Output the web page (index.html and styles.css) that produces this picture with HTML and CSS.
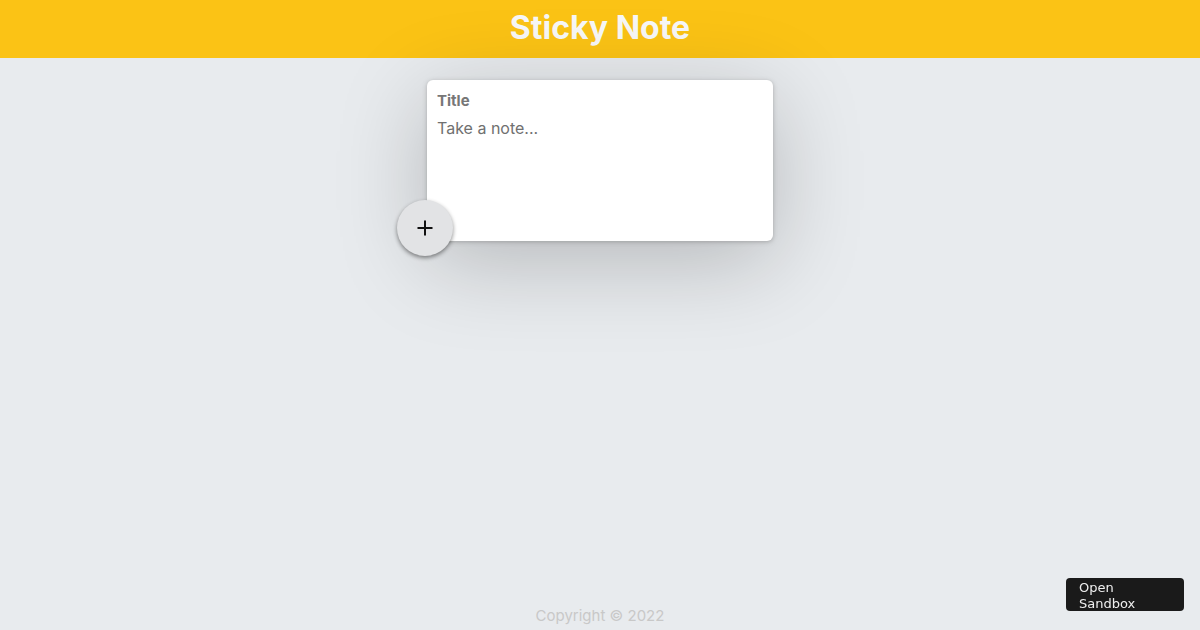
FILE: index.html
```html
<!DOCTYPE html>
<html>
<head>
<meta charset="utf-8">
<link rel="stylesheet" href="styles.css">
</head>
<body>
<div class="page">
  <header class="header"><h1>Sticky Note</h1></header>
  <main class="main">
    <form class="note-form">
      <input class="title" placeholder="Title">
      <textarea class="content" placeholder="Take a note..." rows="3"></textarea>
      <button type="button" class="add">
        <svg width="18" height="18" viewBox="0 0 18 18"><path d="M9 1.5v15M1.5 9h15" stroke="#111" stroke-width="2" fill="none"/></svg>
      </button>
    </form>
  </main>
  <footer class="footer">Copyright © 2022</footer>
</div>
<div class="sandbox">Open<br>Sandbox</div>
</body>
</html>
```
FILE: styles.css
```css
html, body { margin: 0; padding: 0; }
body {
  background: #e8ebee;
  font-family: Inter, "Noto Sans", sans-serif;
}
.page {
  min-height: 630px;
  display: flex;
  flex-direction: column;
}
.header {
  background: #fbc315;
  height: 58px;
  display: flex;
  align-items: center;
  justify-content: center;
}
.header h1 {
  margin: 0;
  color: #f7f7f7;
  font-size: 32px;
  font-weight: 700;
  line-height: 1;
  margin-top: -2px;
}
.main {
  display: flex;
  justify-content: center;
  padding-top: 22px;
}
.note-form {
  position: relative;
  width: 346px;
  height: 161px;
  box-sizing: border-box;
  background: #fff;
  border-radius: 6px;
  padding: 10px 10px;
  box-shadow: 0 1px 4px rgba(120,120,120,0.5), 0 20px 90px rgba(0,0,0,0.22);
  display: flex;
  flex-direction: column;
}
.title, .content {
  border: none;
  outline: none;
  font-family: inherit;
  padding: 0;
  resize: none;
  background: transparent;
}
.title {
  font-size: 15px;
  font-weight: 700;
  height: 20px;
  color: #777;
}
.title::placeholder { color: #777; }
.content {
  margin-top: 8px;
  font-size: 16px;
  color: #666;
}
.content::placeholder { color: #707070; }
.add {
  position: absolute;
  left: -30px;
  bottom: -15px;
  width: 56px;
  height: 56px;
  border-radius: 50%;
  border: none;
  background: #e2e3e5;
  box-shadow: 0 2px 4px rgba(0,0,0,0.45);
  display: flex;
  align-items: center;
  justify-content: center;
  padding: 0;
}
.footer {
  margin-top: auto;
  text-align: center;
  color: #c8c8c8;
  font-size: 15px;
  padding-bottom: 5px;
}
.sandbox {
  position: fixed;
  right: 16px;
  bottom: 19px;
  width: 118px;
  height: 33px;
  box-sizing: border-box;
  padding: 2px 13px 0;
  background: #1a1a1a;
  border-radius: 4px;
  color: #eee;
  font-family: "DejaVu Sans", sans-serif;
  font-size: 13px;
  line-height: 16px;
}
```
